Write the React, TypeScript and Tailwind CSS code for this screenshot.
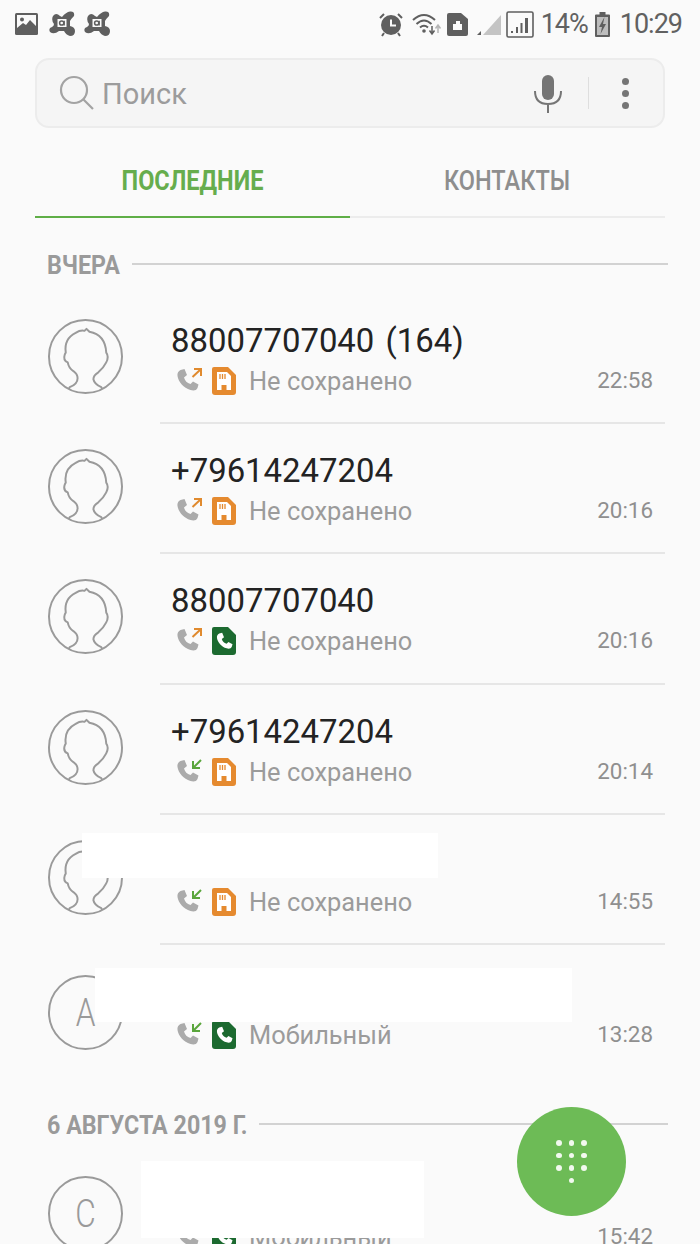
type Call = {
  name: string;
  dir: 'out' | 'in';
  sim: 'orange' | 'green';
  label: string;
  time: string;
  height: string;
};

const yesterday: Call[] = [
  { name: '88007707040 (164)', dir: 'out', sim: 'orange', label: 'Не сохранено', time: '22:58', height: 'h-[130px]' },
  { name: '+79614247204', dir: 'out', sim: 'orange', label: 'Не сохранено', time: '20:16', height: 'h-[130px]' },
  { name: '88007707040', dir: 'out', sim: 'green', label: 'Не сохранено', time: '20:16', height: 'h-[131px]' },
  { name: '+79614247204', dir: 'in', sim: 'orange', label: 'Не сохранено', time: '20:14', height: 'h-[130px]' },
  { name: '', dir: 'in', sim: 'orange', label: 'Не сохранено', time: '14:55', height: 'h-[130px]' },
];

const HANDSET =
  'M5 2 L9 1 L11.500 7 L8.500 9.500 C9.500 13 11.500 15 15 16 L17.500 13.500 L23 16.500 L22 20 C21 22.500 18 23 15 22 C8 20 3 14 2 8 C1.500 5 3 3 5 2 Z';

function Avatar({ letter }: { letter?: string }) {
  return (
    <svg width="77" height="77" viewBox="0 0 78 78" className="shrink-0 text-[#9a9a9a]">
      <circle cx="39" cy="39" r="37" fill="none" stroke="currentColor" strokeWidth="2" />
      {letter ? (
        <text
          transform="translate(39 53) scale(0.8 1)"
          textAnchor="middle"
          fontSize="40"
          fontFamily="Roboto"
          fontWeight="300"
          fill="currentColor"
        >
          {letter}
        </text>
      ) : (
        <path
          d="M22 72 L23 70 Q31 67 31 61 Q31 57 27 54 Q22 51 21 45 Q16 43 18 37 L19 35 Q17 21 29 15 Q34 12 38 13 L40 11 L43 14 Q59 17 60 35 Q63 39 60 45 Q57 51 52 55 Q47 58 47 62 Q48 67 55 70 L56 72"
          fill="none"
          stroke="currentColor"
          strokeWidth="2"
          strokeLinejoin="round"
        />
      )}
    </svg>
  );
}

function CallIcon({ dir }: { dir: 'out' | 'in' }) {
  return (
    <svg width="30" height="28" viewBox="0 0 30 28" className="shrink-0">
      <g transform="translate(3.500 1)">
        <path d={HANDSET} fill="#ababab" />
      </g>
      {dir === 'out' ? (
        <path d="M20.500 10 L28.500 2.500 M22 2 H29 V9" fill="none" stroke="#e08a2e" strokeWidth="2" />
      ) : (
        <path d="M29 2 L21.500 9.500 M21 3 V10 H28" fill="none" stroke="#5aa63c" strokeWidth="2" />
      )}
    </svg>
  );
}

function SimIcon({ sim }: { sim: 'orange' | 'green' }) {
  if (sim === 'green') {
    return (
      <svg width="24" height="28" viewBox="0 0 24 28" className="shrink-0">
        <path d="M2 0 H16 L24 8 V25 Q24 28 21 28 H3 Q0 28 0 25 V2 Q0 0 2 0 Z" fill="#1c6a30" />
        <g transform="translate(3.500 5) scale(0.74)">
          <path d={HANDSET} fill="#fff" />
        </g>
      </svg>
    );
  }
  return (
    <svg width="24" height="28" viewBox="0 0 24 28" className="shrink-0">
      <path d="M2 0 H16 L24 8 V25 Q24 28 21 28 H3 Q0 28 0 25 V2 Q0 0 2 0 Z" fill="#e58a2f" />
      <path d="M5 5 H15 L19 9 V23 H14.500 V18 H9.500 V23 H5 Z" fill="#fff" />
      <path d="M8 7 V12 M10.500 7 V12 M13 7 V12" stroke="#e58a2f" strokeWidth="1.300" />
    </svg>
  );
}

function SubLine({ call }: { call: Pick<Call, 'dir' | 'sim' | 'label' | 'time'> }) {
  return (
    <div className="flex h-[40px] w-full items-center">
      <CallIcon dir={call.dir} />
      <span className="ml-[10px]">
        <SimIcon sim={call.sim} />
      </span>
      <span className="ml-[13px] text-[25.400px] text-[#9b9b9b]">{call.label}</span>
      <span className="ml-auto text-[22.400px] text-[#8f8f8f]">{call.time}</span>
    </div>
  );
}

function CallRow({ call }: { call: Call }) {
  return (
    <div className={`flex ${call.height}`}>
      <div className="w-[160px] pl-[47px] pt-[24px]">
        <Avatar />
      </div>
      <div className="mr-[35px] flex min-w-0 flex-1 flex-col border-b-2 border-[#e6e6e6] px-[12px] pt-[26px]">
        <div className="-ml-[1px] h-[41px] text-[32.900px] leading-[42px] text-[#232323] [word-spacing:3px]">
          {call.name}
        </div>
        <SubLine call={call} />
      </div>
    </div>
  );
}

function SectionTitle({ children, width }: { children: string; width: string }) {
  return (
    <div className="flex items-center pl-[47px] pr-[32px]">
      <div className={`flex ${width} shrink-0 whitespace-nowrap`}>
        <span className="origin-left scale-x-[0.895] text-[26px] font-bold leading-[30px] text-[#9a9a9a]">
          {children}
        </span>
      </div>
      <div className="mb-[3px] h-[2px] flex-1 bg-[#d2d2d2]" />
    </div>
  );
}

function AvastIcon() {
  return (
    <svg width="26" height="26" viewBox="0 0 26 26" className="shrink-0">
      <path
        fillRule="evenodd"
        fill="#5f5f5f"
        d="M4 5 Q7 1 11 5 L13 6 Q17 1 21 0.500 Q26 0 25 5 Q22 8 21 10 L21 15 Q26 16 26 20 Q26 25 21 25 Q17 24 15 20 L10 20 Q5 24 1 21 Q-1 17 3 16 Q5 15 5 13 Q2 9 4 5 Z M8.500 8 H17.500 V16 H8.500 Z"
      />
      <circle cx="12.700" cy="12" r="2.100" fill="none" stroke="#5f5f5f" strokeWidth="1.500" />
      <path d="M15.300 9.800 V14.400" stroke="#5f5f5f" strokeWidth="1.200" />
    </svg>
  );
}

function StatusBar() {
  return (
    <div className="flex h-[48px] items-center pl-[15px] pr-[18px] text-[#616161]">
      <svg width="23" height="22" viewBox="0 0 23 22" className="shrink-0">
        <rect width="23" height="22" rx="1.500" fill="#5f5f5f" />
        <rect x="2" y="2" width="19" height="13" fill="#fafafa" />
        <circle cx="7" cy="6.500" r="2" fill="#5f5f5f" />
        <path d="M2 15 L8 10 L11 12 L15 7 L21 13 V18 H2 Z" fill="#5f5f5f" />
      </svg>
      <span className="ml-[11px]">
        <AvastIcon />
      </span>
      <span className="ml-[9px]">
        <AvastIcon />
      </span>
      <svg width="24" height="25" viewBox="0 0 24 25" className="ml-auto shrink-0">
        <circle cx="12" cy="13" r="10" fill="#5f5f5f" />
        <path d="M12 7.500 V13.500 H17" fill="none" stroke="#fafafa" strokeWidth="2" />
        <path d="M1 6 L5 2 M23 6 L19 2 M5 21 L3 24 M19 21 L21 24" stroke="#5f5f5f" strokeWidth="2" />
      </svg>
      <svg width="30" height="24" viewBox="0 0 30 24" className="ml-[9px] shrink-0">
        <path d="M1 8 Q12 -2 23 8 M4.500 12 Q12 5 19.500 12 M8 15.500 Q12 12 16 15.500" fill="none" stroke="#5f5f5f" strokeWidth="2" />
        <circle cx="12" cy="19" r="1.800" fill="#5f5f5f" />
        <path d="M20 14 V21 M17.500 18.500 L20 22 L22.500 18.500" fill="none" stroke="#5f5f5f" strokeWidth="1.500" />
        <path d="M26 21 V14 M23.500 16.500 L26 13 L28.500 16.500" fill="none" stroke="#b5b5b5" strokeWidth="1.500" />
      </svg>
      <svg width="21" height="23" viewBox="0 0 21 23" className="ml-[5px] shrink-0">
        <path d="M2 0 H14 L21 6 V21 Q21 23 19 23 H2 Q0 23 0 21 V2 Q0 0 2 0 Z" fill="#5f5f5f" />
        <path d="M6 17 V11 H9 V8 H13 V11 H15 V17 Z" fill="#fafafa" />
      </svg>
      <svg width="26" height="24" viewBox="0 0 26 24" className="ml-[8px] shrink-0">
        <path d="M1 23 L5 19 V23 Z" fill="#5f5f5f" />
        <path d="M7 23 L25 3 V23 Z" fill="#c4c4c4" />
      </svg>
      <svg width="28" height="27" viewBox="0 0 28 27" className="ml-[4px] shrink-0">
        <rect x="1" y="1" width="26" height="25" rx="1.500" fill="none" stroke="#5f5f5f" strokeWidth="1.600" />
        <path d="M5 20 H7 V22 H5 Z M10 16 H12 V22 H10 Z M14.500 12 H16.500 V22 H14.500 Z M19 7 H22 V22 H19 Z" fill="#5f5f5f" />
      </svg>
      <span className="ml-[7px] text-[27px] leading-none tracking-[-1px]">14%</span>
      <svg width="15" height="25" viewBox="0 0 15 25" className="ml-[7px] shrink-0">
        <path d="M4.500 0 H10.500 V2.500 H14 Q15 2.500 15 3.500 V24 Q15 25 14 25 H1 Q0 25 0 24 V3.500 Q0 2.500 1 2.500 H4.500 Z" fill="#5f5f5f" />
        <rect x="2" y="5" width="11" height="18" fill="#bdbdbd" />
        <path d="M9.500 5 L4 15 H7 L5.500 22 L11 12 H8 Z" fill="#5f5f5f" />
      </svg>
      <span className="ml-[10px] text-[27px] leading-none tracking-[-1px]">10:29</span>
    </div>
  );
}

function SearchBar() {
  return (
    <div className="mx-[35px] mt-[10px] flex h-[70px] items-center rounded-[14px] border-2 border-[#ececec] bg-[#f5f5f5] pl-[22px] text-[#9c9c9c]">
      <svg width="36" height="36" viewBox="0 0 36 36" className="shrink-0">
        <circle cx="15" cy="15" r="13" fill="none" stroke="#a3a3a3" strokeWidth="2.200" />
        <path d="M24.500 24.500 L34 34" stroke="#a3a3a3" strokeWidth="2.200" />
      </svg>
      <span className="ml-[7px] mt-[4px] text-[29px]">Поиск</span>
      <svg width="28" height="38" viewBox="0 0 28 38" className="ml-auto mt-[2px] shrink-0">
        <rect x="8" y="0" width="12" height="25" rx="6" fill="#757575" />
        <path d="M1 16 Q1 29 14 29 Q27 29 27 16 M14 29 V38" fill="none" stroke="#757575" strokeWidth="2" />
      </svg>
      <div className="ml-[26px] h-[32px] w-[1px] bg-[#dedede]" />
      <div className="ml-[33px] mr-[34px] flex flex-col gap-[5px]">
        <div className="h-[7px] w-[7px] rounded-full bg-[#757575]" />
        <div className="h-[7px] w-[7px] rounded-full bg-[#757575]" />
        <div className="h-[7px] w-[7px] rounded-full bg-[#757575]" />
      </div>
    </div>
  );
}

function Tabs() {
  return (
    <div className="mx-[35px] flex h-[90px] border-b-2 border-[#ececec]">
      <div className="-mb-[2px] flex w-[315px] items-center justify-center border-b-2 border-[#5fae47] pt-[18px]">
        <span className="inline-block scale-x-[0.84] whitespace-nowrap text-[28px] font-bold text-[#66ad4d]">ПОСЛЕДНИЕ</span>
      </div>
      <div className="flex flex-1 items-center justify-center pt-[18px]">
        <span className="inline-block scale-x-[0.84] whitespace-nowrap text-[28px] font-medium text-[#8e8e8e]">КОНТАКТЫ</span>
      </div>
    </div>
  );
}

export default function App() {
  return (
    <div className="relative h-[1244px] w-[700px] overflow-hidden bg-[#fafafa] [font-family:Roboto,sans-serif]">
      <StatusBar />
      <SearchBar />
      <Tabs />

      <div className="pb-[14px] pt-[32px]">
        <SectionTitle width="w-[85px]">ВЧЕРА</SectionTitle>
      </div>

      {yesterday.map((call) => (
        <CallRow key={call.name + call.time} call={call} />
      ))}

      {/* no divider under the last row of a day */}
      <div className="flex h-[151px]">
        <div className="w-[160px] pl-[47px] pt-[29px]">
          <Avatar letter="А" />
        </div>
        <div className="flex flex-1 items-start pl-[12px] pr-[47px] pt-[70px]">
          <SubLine call={{ dir: 'in', sim: 'green', label: 'Мобильный', time: '13:28' }} />
        </div>
      </div>

      <div className="pt-[14px]">
        <SectionTitle width="w-[212px]">6 АВГУСТА 2019 Г.</SectionTitle>
      </div>

      <div className="flex">
        <div className="w-[160px] pl-[47px] pt-[35px]">
          <Avatar letter="С" />
        </div>
        <div className="flex flex-1 items-start pl-[12px] pr-[47px] pt-[77px]">
          <SubLine call={{ dir: 'in', sim: 'green', label: 'Мобильный', time: '15:42' }} />
        </div>
      </div>

      {/* white blocks painted over the hidden names */}
      <div className="absolute left-[82px] top-[833px] h-[45px] w-[356px] bg-white" />
      <div className="absolute left-[95px] top-[968px] h-[54px] w-[477px] bg-white" />
      <div className="absolute left-[141px] top-[1161px] h-[77px] w-[283px] bg-white" />

      <div className="absolute left-[517px] top-[1107px] flex h-[109px] w-[109px] items-center justify-center rounded-full bg-[#6dbb56]">
        <div className="grid grid-cols-3 gap-[7px]">
          {[0, 1, 2, 3, 4, 5, 6, 7, 8].map((d) => (
            <div key={d} className="h-[5.500px] w-[5.500px] rounded-full bg-[#f2f9ef]" />
          ))}
          <div className="col-start-2 h-[5.500px] w-[5.500px] rounded-full bg-[#f2f9ef]" />
        </div>
      </div>
    </div>
  );
}
